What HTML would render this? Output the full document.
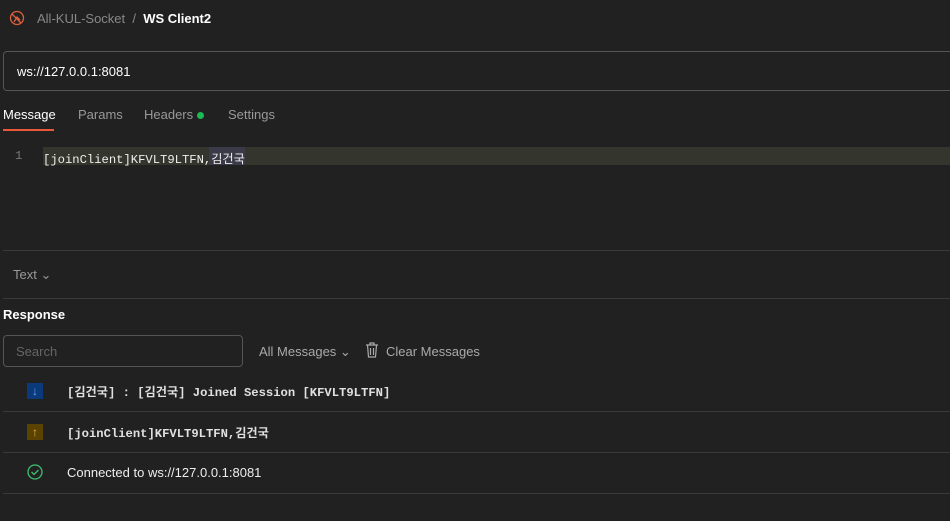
<!DOCTYPE html>
<html><head><style>
body{margin:0;width:950px;height:521px;background:#212121;font-family:"Liberation Sans","Noto Sans CJK KR",sans-serif;color:#e0e0e0;position:relative;overflow:hidden;font-size:13px}
.a{position:absolute;white-space:nowrap}
.mono{font-family:"Liberation Mono","Noto Sans CJK KR",monospace;font-size:12.2px;font-weight:bold}
.line{position:absolute;height:1px;background:#3a3a3a;left:3px;right:0}
</style></head><body>
<svg class="a" style="left:9px;top:10px" width="16" height="16" viewBox="0 0 16 16" fill="none" stroke="#e0603e" stroke-width="1.3"><circle cx="8" cy="8" r="6.5"/><path d="M3 4l9 9M5 12l3-5 3 3"/></svg>
<div class="a" style="left:37px;top:11px;color:#888">All-KUL-Socket&nbsp;&nbsp;/&nbsp;&nbsp;<b style="color:#fff">WS Client2</b></div>
<div class="a" style="left:3px;top:51px;width:960px;height:38px;border:1px solid #555;border-radius:4px"></div>
<div class="a" style="left:17px;top:64px;color:#fff;font-size:13px">ws://127.0.0.1:8081</div>
<div class="a" style="left:3px;top:107px;color:#fff">Message</div>
<div class="a" style="left:3px;top:129px;width:51px;height:2px;background:#e8583a"></div>
<div class="a" style="left:78px;top:107px;color:#999">Params</div>
<div class="a" style="left:144px;top:107px;color:#999">Headers <span style="display:inline-block;width:7px;height:7px;border-radius:50%;background:#1db954"></span></div>
<div class="a" style="left:228px;top:107px;color:#999">Settings</div>
<div class="a" style="left:43px;top:147px;width:907px;height:18px;background:#34352d"></div>
<div class="a" style="left:209px;top:147px;width:36px;height:18px;background:#3b3a48"></div>
<div class="a mono" style="left:15px;top:149px;color:#777;font-weight:normal">1</div>
<div class="a mono" style="left:43px;top:149px;color:#eee;font-weight:normal">[joinClient]KFVLT9LTFN,김건국</div>
<div class="line" style="top:250px"></div>
<div class="a" style="left:13px;top:267px;color:#999">Text ⌄</div>
<div class="line" style="top:298px"></div>
<div class="a" style="left:3px;top:307px;color:#fff;font-weight:bold">Response</div>
<div class="a" style="left:3px;top:335px;width:238px;height:30px;border:1px solid #555;border-radius:4px"></div>
<div class="a" style="left:16px;top:344px;color:#666">Search</div>
<div class="a" style="left:259px;top:344px;color:#aaa">All Messages ⌄</div>
<svg class="a" style="left:365px;top:342px" width="14" height="16" viewBox="0 0 14 16" fill="none" stroke="#aaa" stroke-width="1.2"><path d="M1 3h12M5 3V1h4v2M2.5 3l1 12h7l1-12M5.5 6v7M8.5 6v7"/></svg>
<div class="a" style="left:386px;top:344px;color:#aaa">Clear Messages</div>
<div class="a" style="left:27px;top:383px;width:16px;height:16px;background:#0b3a7a;color:#6aa0ff;text-align:center;line-height:16px;font-size:12px">↓</div>
<div class="a mono" style="left:67px;top:382px">[김건국] : [김건국] Joined Session [KFVLT9LTFN]</div>
<div class="line" style="top:411px"></div>
<div class="a" style="left:27px;top:424px;width:16px;height:16px;background:#5a4300;color:#e0b040;text-align:center;line-height:16px;font-size:12px">↑</div>
<div class="a mono" style="left:67px;top:423px">[joinClient]KFVLT9LTFN,김건국</div>
<div class="line" style="top:452px"></div>
<svg class="a" style="left:27px;top:464px" width="16" height="16" viewBox="0 0 16 16" fill="none" stroke="#3fbf6f" stroke-width="1.3"><circle cx="8" cy="8" r="7"/><path d="M4.5 8l2.5 2.5 4.5-4.5"/></svg>
<div class="a" style="left:67px;top:465px;color:#eee">Connected to ws://127.0.0.1:8081</div>
<div class="line" style="top:493px"></div>
</body></html>
